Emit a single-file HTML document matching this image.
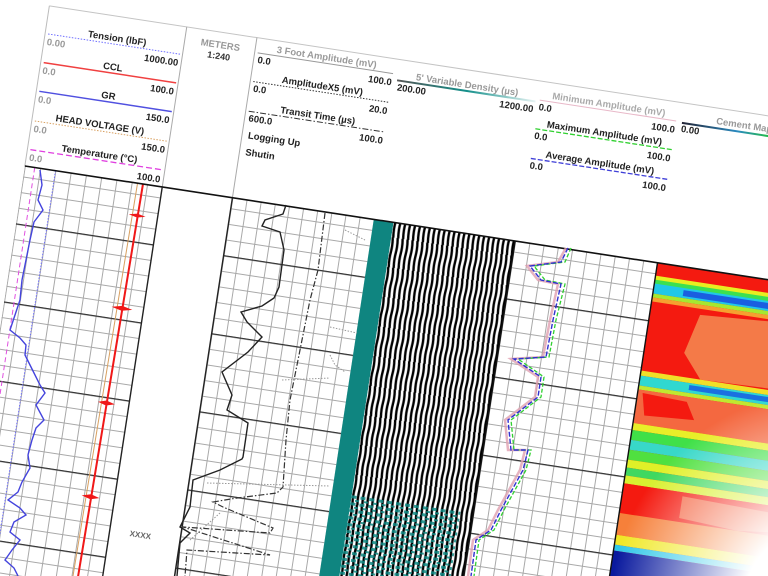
<!DOCTYPE html>
<html><head><meta charset="utf-8"><style>
html,body{margin:0;padding:0;background:#fff;overflow:hidden}
svg{display:block}
text{font-family:"Liberation Sans",sans-serif;font-weight:bold}
</style></head><body>
<svg width="768" height="576" viewBox="0 0 768 576" xmlns="http://www.w3.org/2000/svg">
<defs>
<pattern id="hmin" patternUnits="userSpaceOnUse" x="0" y="159.8" width="1000" height="15.8"><line x1="0" y1="0.5" x2="1000" y2="0.5" stroke="#a8a8a8" stroke-width="1"/></pattern>
<pattern id="hmaj" patternUnits="userSpaceOnUse" x="0" y="223" width="1000" height="79"><line x1="0" y1="0.6" x2="1000" y2="0.6" stroke="#333" stroke-width="1.3"/></pattern>
<pattern id="v1" patternUnits="userSpaceOnUse" x="0" y="0" width="15.45" height="20"><line x1="0.5" y1="0" x2="0.5" y2="20" stroke="#a8a8a8" stroke-width="1"/></pattern>
<pattern id="v3" patternUnits="userSpaceOnUse" x="210" y="0" width="14.3" height="20"><line x1="0.5" y1="0" x2="0.5" y2="20" stroke="#a8a8a8" stroke-width="1"/></pattern>
<pattern id="v5" patternUnits="userSpaceOnUse" x="496" y="0" width="14.4" height="20"><line x1="0.5" y1="0" x2="0.5" y2="20" stroke="#a8a8a8" stroke-width="1"/></pattern>
<pattern id="vdl" patternUnits="userSpaceOnUse" x="373" y="0" width="5" height="30"><path d="M0.3 0 Q1.4 7.5 0.6 15 Q-0.2 22 0.8 30 L3.2 30 Q2.2 22 3 15 Q3.8 7.5 2.7 0Z" fill="#000"/></pattern>
<pattern id="vdlt" patternUnits="userSpaceOnUse" x="373" y="0" width="9" height="7"><rect x="0" y="0" width="5" height="3" fill="#0f8a85"/><rect x="4" y="4" width="4" height="2" fill="#0f8a85"/></pattern>
<linearGradient id="vdg" x1="0" x2="1"><stop offset="0" stop-color="#555"/><stop offset="0.5" stop-color="#138f8a"/><stop offset="1" stop-color="#e8f4f4"/></linearGradient>
<linearGradient id="cmg" x1="0" x2="1"><stop offset="0" stop-color="#223"/><stop offset="0.4" stop-color="#2a8ac0"/><stop offset="0.7" stop-color="#2c2"/><stop offset="1" stop-color="#ee3"/></linearGradient>
<radialGradient id="fade" gradientUnits="userSpaceOnUse" cx="830" cy="610" r="220"><stop offset="0" stop-color="#fff" stop-opacity="1"/><stop offset="0.4" stop-color="#fff" stop-opacity="1"/><stop offset="1" stop-color="#fff" stop-opacity="0"/></radialGradient>
</defs>

<g transform="translate(25,165) rotate(8.7) translate(0,-164)">
<line x1="0" y1="3" x2="840" y2="3" stroke="#c4c4c4" stroke-width="1"/>
<line x1="0" y1="3" x2="0" y2="165" stroke="#bbb" stroke-width="1"/>
<line x1="139" y1="3" x2="139" y2="165" stroke="#aaa" stroke-width="1"/>
<line x1="210" y1="3" x2="210" y2="165" stroke="#aaa" stroke-width="1"/>

<rect x="0" y="165" width="139" height="450" fill="url(#v1)"/>
<rect x="0" y="165" width="139" height="450" fill="url(#hmin)"/>
<rect x="0" y="165" width="139" height="450" fill="url(#hmaj)"/>
<rect x="210" y="165" width="143" height="450" fill="url(#v3)"/>
<rect x="210" y="165" width="143" height="450" fill="url(#hmin)"/>
<rect x="210" y="165" width="143" height="450" fill="url(#hmaj)"/>
<rect x="496" y="165" width="144" height="450" fill="url(#v5)"/>
<rect x="496" y="165" width="144" height="450" fill="url(#hmin)"/>
<rect x="496" y="165" width="144" height="450" fill="url(#hmaj)"/>

<line x1="10" y1="165" x2="10" y2="620" stroke="#e050e0" stroke-width="1" stroke-dasharray="5,3"/>
<line x1="31" y1="165" x2="31" y2="620" stroke="#7070ff" stroke-width="1" stroke-dasharray="1.5,1.5"/>
<line x1="114" y1="165" x2="109" y2="620" stroke="#d8a060" stroke-width="1"/>
<line x1="119.5" y1="165" x2="114" y2="620" stroke="#f01818" stroke-width="2"/>
<g fill="#f01818">
<path d="M110 197 L118.6 195 L127 197 L118.6 199Z"/><path d="M107 291 L117.5 288.5 L128 291 L117.5 293.5Z"/>
<path d="M108 387 L116.3 384.5 L125 387 L116.3 389.5Z"/><path d="M106 482 L115.1 479.5 L124 482 L115.1 484.5Z"/>
</g>

<rect x="353" y="165" width="20" height="450" fill="#0f8580"/>
<rect x="373" y="165" width="123" height="450" fill="#fff"/>
<rect x="373" y="165" width="123" height="450" fill="url(#vdl)"/>
<rect x="373" y="440" width="110" height="170" fill="url(#vdlt)" opacity="0.85"/>

<g>
<rect x="640" y="165" width="200" height="450" fill="#f41a10"/>
<rect x="640" y="178" width="200" height="5" fill="#e8ee20"/>
<rect x="640" y="182" width="200" height="5" fill="#3ce050"/>
<rect x="640" y="186" width="200" height="10" fill="#20c8e8"/>
<rect x="670" y="188" width="140" height="6" fill="#1a5ee0"/>
<rect x="640" y="196" width="200" height="4" fill="#a6e830"/>
<rect x="640" y="200" width="200" height="4" fill="#f6a030"/>
<path d="M690 210 L760 206 L800 215 L820 250 L790 272 L700 274 L680 250Z" fill="#f47a48"/>
<rect x="640" y="274" width="200" height="5" fill="#f0e028"/>
<rect x="640" y="279" width="200" height="10" fill="#30d8d0"/>
<rect x="690" y="281" width="90" height="5" fill="#1a70e0"/>
<rect x="640" y="289" width="200" height="4" fill="#c0e830"/>
<rect x="640" y="293" width="200" height="34" fill="#f46840"/>
<path d="M645 296 L690 298 L700 315 L650 318Z" fill="#f41a10"/>
<rect x="640" y="327" width="200" height="7" fill="#e8ee28"/>
<rect x="640" y="334" width="200" height="10" fill="#40e048"/>
<rect x="640" y="344" width="200" height="10" fill="#38d8c8"/>
<rect x="640" y="354" width="200" height="10" fill="#50e040"/>
<rect x="640" y="364" width="200" height="8" fill="#e0f028"/>
<rect x="640" y="372" width="200" height="8" fill="#40d860"/>
<rect x="640" y="380" width="200" height="8" fill="#d8f030"/>
<rect x="640" y="388" width="200" height="30" fill="#f41a10"/>
<path d="M700 392 L790 395 L830 410 L760 418 L700 414Z" fill="#f46a48"/>
<rect x="640" y="418" width="200" height="22" fill="#f6803a"/>
<rect x="640" y="440" width="200" height="10" fill="#f0e828"/>
<rect x="640" y="450" width="200" height="6" fill="#30c8e8"/>
<rect x="640" y="456" width="200" height="160" fill="#0a1a9e"/>
</g>

<line x1="0" y1="165" x2="840" y2="165" stroke="#111" stroke-width="1.6"/>
<line x1="139" y1="165" x2="139" y2="620" stroke="#222" stroke-width="1.4"/>
<line x1="210" y1="165" x2="210" y2="620" stroke="#222" stroke-width="1.4"/>
<line x1="496" y1="165" x2="496" y2="620" stroke="#111" stroke-width="1.4"/>
<line x1="640" y1="165" x2="640" y2="620" stroke="#111" stroke-width="1.4"/>
<text x="170" y="515" font-size="8" fill="#666" font-weight="normal" text-anchor="middle">XXXX</text>

<g font-size="9.5">
<text x="72" y="28" text-anchor="middle" fill="#222">Tension (lbF)</text>
<line x1="3" y1="31" x2="137" y2="31" stroke="#7070ff" stroke-width="1" stroke-dasharray="1.5,1.5"/>
<text x="3" y="42" fill="#999">0.00</text><text x="136" y="43" text-anchor="end" fill="#222">1000.00</text>
<text x="72" y="57" text-anchor="middle" fill="#222">CCL</text>
<line x1="3" y1="60" x2="137" y2="60" stroke="#f04040" stroke-width="1.5"/>
<text x="3" y="71" fill="#999">0.0</text><text x="136" y="72" text-anchor="end" fill="#222">100.0</text>
<text x="72" y="86" text-anchor="middle" fill="#222">GR</text>
<line x1="3" y1="89" x2="137" y2="89" stroke="#5050e0" stroke-width="1.5"/>
<text x="3" y="100" fill="#999">0.0</text><text x="136" y="101" text-anchor="end" fill="#222">150.0</text>
<text x="68" y="116" text-anchor="middle" fill="#222">HEAD VOLTAGE (V)</text>
<line x1="3" y1="119" x2="137" y2="119" stroke="#d8a060" stroke-width="1" stroke-dasharray="1.5,1.5"/>
<text x="3" y="130" fill="#999">0.0</text><text x="136" y="131" text-anchor="end" fill="#222">150.0</text>
<text x="72" y="145" text-anchor="middle" fill="#222">Temperature (°C)</text>
<line x1="3" y1="148" x2="137" y2="148" stroke="#e040e0" stroke-width="1.3" stroke-dasharray="6,3"/>
<text x="3" y="159" fill="#999">0.0</text><text x="136" y="161" text-anchor="end" fill="#222">100.0</text>

<text x="175" y="19" text-anchor="middle" fill="#999">METERS</text>
<text x="175" y="30" text-anchor="middle" fill="#333" font-size="9">1:240</text>

<text x="282" y="15" text-anchor="middle" fill="#999" font-weight="normal">3 Foot Amplitude (mV)</text>
<line x1="213" y1="18" x2="350" y2="18" stroke="#999" stroke-width="1"/>
<text x="214" y="28" fill="#222">0.0</text><text x="350" y="30" text-anchor="end" fill="#222">100.0</text>
<text x="282" y="44" text-anchor="middle" fill="#222">AmplitudeX5 (mV)</text>
<line x1="213" y1="47" x2="350" y2="47" stroke="#333" stroke-width="1" stroke-dasharray="1.5,1.5"/>
<text x="214" y="57" fill="#222">0.0</text><text x="350" y="59" text-anchor="end" fill="#222">20.0</text>
<text x="282" y="74" text-anchor="middle" fill="#222">Transit Time (µs)</text>
<line x1="213" y1="77" x2="350" y2="77" stroke="#333" stroke-width="1" stroke-dasharray="6,2,1.5,2"/>
<text x="214" y="87" fill="#222">600.0</text><text x="350" y="89" text-anchor="end" fill="#222">100.0</text>
<text x="216" y="104" fill="#222">Logging Up</text>
<text x="216" y="121" fill="#222">Shutin</text>

<text x="425" y="21" text-anchor="middle" fill="#999" font-weight="normal">5' Variable Density (µs)</text>
<rect x="355" y="23" width="140" height="2" fill="url(#vdg)"/>
<text x="356" y="34" fill="#222">200.00</text><text x="494" y="35" text-anchor="end" fill="#222">1200.00</text>

<text x="568" y="19" text-anchor="middle" fill="#aaa" font-weight="normal">Minimum Amplitude (mV)</text>
<line x1="499" y1="22" x2="637" y2="22" stroke="#e8b8c8" stroke-width="1"/>
<text x="499" y="32" fill="#222">0.0</text><text x="637" y="34" text-anchor="end" fill="#222">100.0</text>
<text x="568" y="48" text-anchor="middle" fill="#222">Maximum Amplitude (mV)</text>
<line x1="499" y1="51" x2="637" y2="51" stroke="#30d030" stroke-width="1.3" stroke-dasharray="5,2"/>
<text x="499" y="61" fill="#222">0.0</text><text x="637" y="63" text-anchor="end" fill="#222">100.0</text>
<text x="568" y="78" text-anchor="middle" fill="#222">Average Amplitude (mV)</text>
<line x1="499" y1="81" x2="637" y2="81" stroke="#4040d8" stroke-width="1.3" stroke-dasharray="5,2"/>
<text x="499" y="91" fill="#222">0.0</text><text x="637" y="93" text-anchor="end" fill="#222">100.0</text>

<text x="705" y="19" text-anchor="middle" fill="#999" font-weight="normal">Cement Map</text>
<rect x="643" y="22" width="140" height="2" fill="url(#cmg)"/>
<text x="643" y="32" fill="#222">0.00</text>
</g>
</g>

<polyline fill="none" stroke="#4444dd" stroke-width="1.4" points="40,170 42,185 38,200 43,210 34,222 30,240 26,260 22,280 20,300 14,318 10,330 20,338 26,345 25,355 30,365 40,385 45,393 36,405 44,420 36,428 32,440 28,455 30,468 22,482 18,492 8,500 20,508 26,515 14,522 10,532 20,540 12,550 5,560 14,568 18,576"/>
<polyline fill="none" stroke="#222" stroke-width="1.4" points="286,205 283,214 265,220 262,226 280,232 284,250 279,287 274,298 262,306 241,312 247,322 262,337 248,352 222,372 232,395 227,410 248,423 243,457 242,459 220,470 193,480 190,507 180,527 190,533 180,543 177,576"/>
<polyline fill="none" stroke="#333" stroke-width="1.2" stroke-dasharray="6,2,1.5,2" points="325,213 318,270 310,300 300,350 290,400 286,440 283,487 277,493 237,498 213,502 223,507 273,528 270,533 183,527 270,555 187,550 185,576"/>
<g fill="none" stroke="#999" stroke-width="1" stroke-dasharray="1.5,1.5">
<polyline points="207,483 330,486"/>
<polyline points="220,513 190,540"/>
<polyline points="330,327 357,333"/>
<polyline points="282,380 330,378"/>
<polyline points="330,355 335,365 345,372"/>
<polyline points="345,230 365,240"/>
</g>
<polyline fill="none" stroke="#e0a0b0" stroke-width="2.5" opacity="0.8" points="566,248 558,262 527,266 538,280 558,284 550,320 543,357 511,359 538,377 535,397 505,420 508,450 525,450 520,470 498,510 488,530 473,540 468,576"/>
<polyline fill="none" stroke="#30d030" stroke-width="1.3" stroke-dasharray="4,2" points="571,248 565,262 534,266 545,280 565,284 556,320 549,357 518,359 544,377 541,397 511,420 514,450 531,450 526,470 504,510 494,530 479,540 474,576"/>
<polyline fill="none" stroke="#3030d0" stroke-width="1.4" stroke-dasharray="5,2" points="568,248 561,262 530,266 541,280 561,284 553,320 546,357 514,359 541,377 538,397 508,420 511,450 528,450 523,470 501,510 491,530 476,540 471,576"/>

<rect x="560" y="300" width="208" height="276" fill="url(#fade)"/>
</svg>
</body></html>
